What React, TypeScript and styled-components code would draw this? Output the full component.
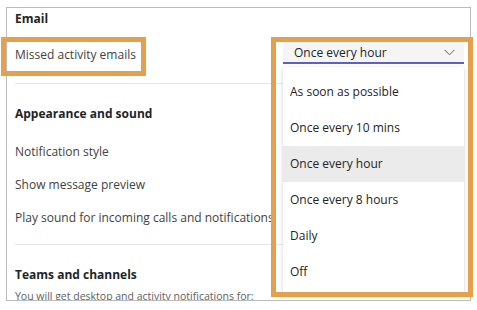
import React from "react";
import styled, { createGlobalStyle } from "styled-components";

const GlobalStyle = createGlobalStyle`
	html, body {
		margin: 0;
		padding: 0;
		background: #ffffff;
	}
	body {
		font-family: "Open Sans", "Noto Sans", sans-serif;
		color: #424242;
	}
`;

const Page = styled.div`
	position: relative;
	width: 477px;
	height: 310px;
	overflow: hidden;
`;

const Frame = styled.section`
	position: relative;
	box-sizing: border-box;
	width: 465px;
	height: 294px;
	margin: 7px 0 0 6px;
	padding: 1px 6px 0 8px;
	border: 1.5px solid #bcbcbc;
	overflow: hidden;
`;

const Heading = styled.h3`
	margin: ${ p => p.$top }px 0 0;
	line-height: 20px;
	font-size: 12px;
	font-weight: 700;
	color: #242424;
`;

const Row = styled.div`
	display: flex;
	align-items: flex-start;
	justify-content: space-between;
	height: ${ p => p.$height || 33 }px;
	margin-top: ${ p => p.$top || 0 }px;
`;

const Label = styled.span`
	align-self: center;
	font-size: 12px;
	line-height: 20px;
	white-space: nowrap;
	color: #424242;
`;

const Divider = styled.hr`
	margin: ${ p => p.$top }px 0 0;
	border: 0;
	border-top: 1px solid #e6e6e6;
`;

const Hint = styled.p`
	margin: 3px 0 0;
	font-size: 10.5px;
	line-height: 16px;
	color: #616161;
	white-space: nowrap;
`;

const SelectWrap = styled.div`
	position: relative;
	width: 181px;
	margin-top: 2px;
`;

const SelectField = styled.div`
	display: flex;
	align-items: center;
	justify-content: space-between;
	box-sizing: border-box;
	height: 22px;
	padding: 0 9px 0 11px;
	background: #f5f5f5;
	border-bottom: 2px solid #5b5fc7;
	font-size: 12px;
	color: #242424;
`;

const Menu = styled.ul`
	position: absolute;
	top: 25px;
	left: 0;
	right: 0;
	margin: 0;
	padding: 7px 0 4px;
	list-style: none;
	background: #ffffff;
	box-shadow: 0 1px 4px rgba(0, 0, 0, 0.18);
	border-radius: 3px;
	z-index: 2;
`;

const MenuItem = styled.li`
	height: 36px;
	padding: 0 7px;
	line-height: 36px;
	font-size: 12px;
	color: #242424;
	background: ${ p => p.$active ? "#ebebeb" : "transparent" };
`;

const Callout = styled.div`
	position: absolute;
	left: ${ p => p.$x }px;
	top: ${ p => p.$y }px;
	width: ${ p => p.$w }px;
	height: ${ p => p.$h }px;
	box-sizing: border-box;
	border: 5px solid #e5a04b;
	pointer-events: none;
	z-index: 5;
`;

const Chevron = () => (
	<svg width="11" height="7" viewBox="0 0 11 7" fill="none">
		<path d="M0.5 0.8 L5.5 5.8 L10.5 0.8" stroke="#616161" strokeWidth="1" />
	</svg>
);

const options = [
	"As soon as possible",
	"Once every 10 mins",
	"Once every hour",
	"Once every 8 hours",
	"Daily",
	"Off",
];

export default function App() {
	return (
		<Page>
			<GlobalStyle />
			<Frame>
				<Heading $top={ 0 }>Email</Heading>
				<Row $top={ 11 } $height={ 30 }>
					<Label>Missed activity emails</Label>
					<SelectWrap>
						<SelectField>
							Once every hour
							<Chevron />
						</SelectField>
						<Menu>
							{ options.map(o => (
								<MenuItem key={ o } $active={ o === "Once every hour" }>{ o }</MenuItem>
							)) }
						</Menu>
					</SelectWrap>
				</Row>
				<Divider $top={ 13 } />
				<Heading $top={ 20 }>Appearance and sound</Heading>
				<Row $top={ 11 }><Label>Notification style</Label></Row>
				<Row><Label>Show message preview</Label></Row>
				<Row><Label>Play sound for incoming calls and notifications</Label></Row>
				<Divider $top={ 10 } />
				<Heading $top={ 20 }>Teams and channels</Heading>
				<Hint>You will get desktop and activity notifications for:</Hint>
			</Frame>
			<Callout $x={ 1 } $y={ 37 } $w={ 145 } $h={ 39 } />
			<Callout $x={ 271 } $y={ 37 } $w={ 202 } $h={ 260 } />
		</Page>
	);
}
